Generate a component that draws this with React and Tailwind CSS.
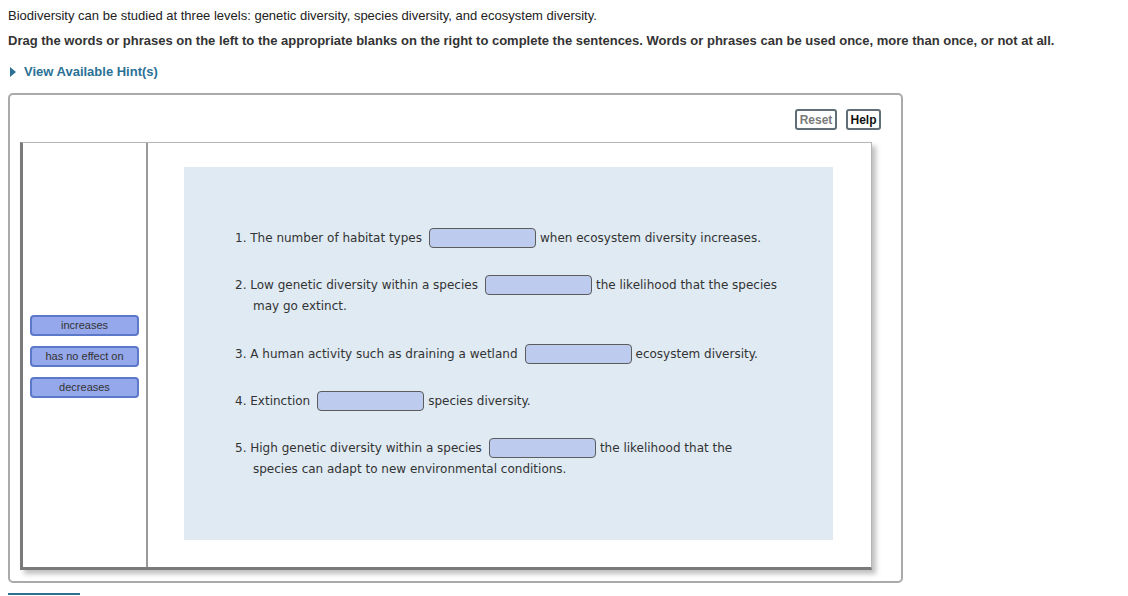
import React from "react";

const Blank = () => (
  <span className="inline-block w-[107px] h-[20px] rounded-[4px] border border-[#5c5c5c] bg-[#bccbee] shrink-0" />
);

const Chip = ({ children }) => (
  <div className="h-[21px] w-[109px] rounded-[4px] border-2 border-[#5b78c9] bg-[#95a8eb] flex items-center justify-center text-[11px] text-[#333] leading-none">
    {children}
  </div>
);

function Sentence({ before, after, cont }) {
  return (
    <div className="mb-[27px]">
      <div className="flex items-center h-[20px] whitespace-nowrap">
        <span>{before}</span>
        <span className="ml-[7px] flex"><Blank /></span>
        <span className="ml-[4px]">{after}</span>
      </div>
      {cont && <div className="pl-[18px] leading-[21px] mt-[1px]">{cont}</div>}
    </div>
  );
}

export default function App() {
  return (
    <div className="w-[1128px] h-[596px] overflow-hidden bg-white px-[8px] pt-[7px] text-[#222]" style={{ fontFamily: '"Liberation Sans", Arial, sans-serif' }}>
      <p className="text-[13px] leading-[18px]">
        Biodiversity can be studied at three levels: genetic diversity, species diversity, and ecosystem diversity.
      </p>
      <p className="text-[13px] leading-[18px] font-bold mt-[7px] text-[#333]">
        Drag the words or phrases on the left to the appropriate blanks on the right to complete the sentences. Words or phrases can be used once, more than once, or not at all.
      </p>
      <div className="mt-[13px] flex items-center h-[18px] text-[13px] font-bold text-[#2b7196]">
        <svg width="6" height="10" viewBox="0 0 6 10" className="ml-[2px] mr-[8px]"><path d="M0 0 L6 5 L0 10 Z" fill="#2b7196" /></svg>
        <span>View Available Hint(s)</span>
      </div>

      <div className="mt-[12px] w-[895px] h-[490px] border-2 border-[#aaaaaa] rounded-[5px] pl-[10px] pt-[14px]">
        <div className="flex justify-end pr-[20px] gap-[9px]">
          <div className="h-[21px] w-[42px] border-2 border-[#5f6e77] rounded-[3px] flex items-center justify-center text-[12px] font-bold text-[#7a7a7a]">Reset</div>
          <div className="h-[21px] w-[35px] border-2 border-[#5f6e77] rounded-[3px] flex items-center justify-center text-[12px] font-bold text-[#111]">Help</div>
        </div>
        <div className="mt-[12px] w-[852px] h-[428px] flex border-t border-r border-[#b5b5b5] border-l-[3px] border-l-[#7a7a7a] border-b-[3px] border-b-[#7a7a7a] shadow-[4px_4px_5px_rgba(0,0,0,0.25)] bg-white">
          <div className="w-[125px] border-r-2 border-[#9a9a9a] flex flex-col items-start justify-center gap-[10px] pl-[7px] pt-[2px]">
            <Chip>increases</Chip>
            <Chip>has no effect on</Chip>
            <Chip>decreases</Chip>
          </div>
          <div className="flex-1 pl-[36px] pt-[24px]">
            <div className="w-[649px] h-[373px] bg-[#dfeaf3] pl-[51px] pt-[61px] text-[12px] text-[#333]" style={{ fontFamily: '"DejaVu Sans", Verdana, sans-serif' }}>
              <Sentence before="1. The number of habitat types" after="when ecosystem diversity increases." />
              <Sentence before="2. Low genetic diversity within a species" after="the likelihood that the species" cont="may go extinct." />
              <Sentence before="3. A human activity such as draining a wetland" after="ecosystem diversity." />
              <Sentence before="4. Extinction" after="species diversity." />
              <Sentence before="5. High genetic diversity within a species" after="the likelihood that the" cont="species can adapt to new environmental conditions." />
            </div>
          </div>
        </div>
      </div>
      <div className="mt-[10px] w-[72px] h-[2px] bg-[#2f6f8f]" />
    </div>
  );
}
